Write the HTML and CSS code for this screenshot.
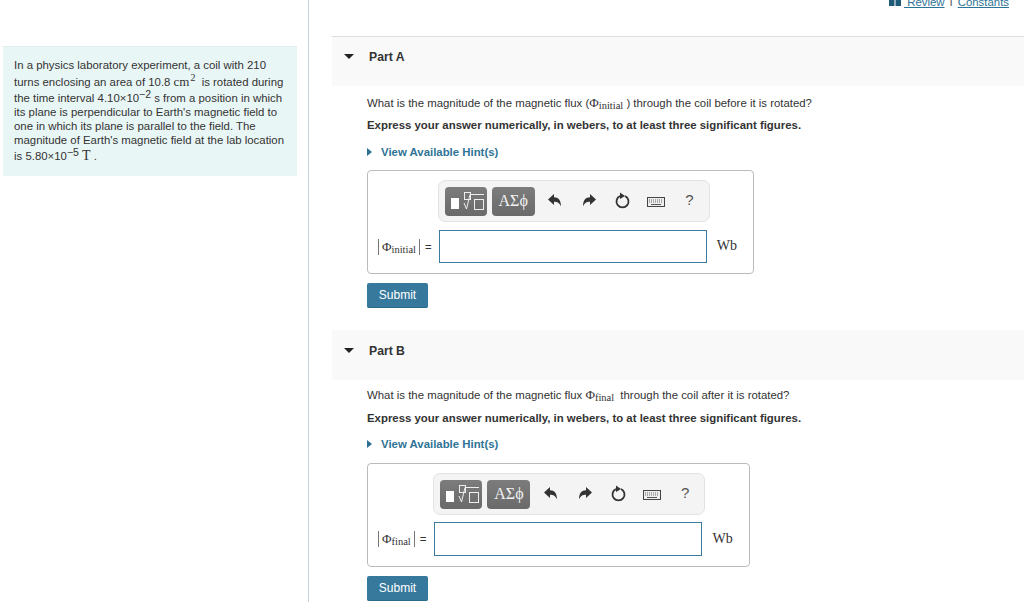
FILE: index.html
```html
<!DOCTYPE html>
<html lang="en">
<head>
    <meta charset="UTF-8">
    <title>Part A and Part B</title>
    <link rel="stylesheet" href="styles.css">
</head>
<body>
    <aside class="sidebar">
        <div class="problem">
            In a physics laboratory experiment, a coil with 210 turns enclosing an area of 10.8
            <span class="math cm">cm<sup>2</sup></span> is rotated during the time interval
            4.10×10<sup>−2</sup> s from a position in which its plane is perpendicular to Earth's
            magnetic field to one in which its plane is parallel to the field. The magnitude of
            Earth's magnetic field at the lab location is 5.80×10<sup>−5</sup> <span class="math big">T</span> .
        </div>
    </aside>

    <main class="main">
        <div class="toplinks">
            <svg class="book" width="12" height="6" viewBox="0 0 12 6"><rect width="5.500" height="6" fill="#1f5a78"/><rect x="6.500" width="5.500" height="6" fill="#1f5a78"/></svg>
            <a href="#">&nbsp;Review</a><span class="sep">I</span><a href="#">Constants</a>
        </div>

        <section class="part">
            <h2 class="part-head"><span class="caret-down"></span>Part A</h2>
            <div class="part-body part-body-a">
                <p class="question">What is the magnitude of the magnetic flux (<span class="math phi">Φ<sub>initial</sub></span> ) through the coil before it is rotated?</p>
                <p class="instruction">Express your answer numerically, in webers, to at least three significant figures.</p>
                <a class="hints" href="#"><span class="caret-right"></span>View Available Hint(s)</a>
                <div class="answer">
                    <div class="toolbar">
                        <span class="tool-btn"><svg width="42" height="29" viewBox="0 0 42 29"><rect x="6" y="11" width="8" height="11" fill="#fff"/><rect x="19.500" y="5.500" width="6" height="7" fill="none" stroke="#eee"/><path d="M19 16l2.500 6L25 7.500h14" fill="none" stroke="#eee"/><rect x="29.500" y="12.500" width="9" height="10" fill="none" stroke="#eee"/></svg></span>
                        <span class="tool-btn greek">ΑΣϕ</span>
                        <span class="tool-icons">
                            <svg width="14" height="13" viewBox="0 0 14 13"><path d="M0 5.500L6 0v3.200c4.500 0 7 3 7 9.300-1.500-3.500-3.500-4.700-7-4.700V11z" fill="#333"/></svg>
                            <svg width="14" height="13" viewBox="0 0 14 13"><path d="M14 5.500L8 0v3.200c-4.500 0-7 3-7 9.300 1.500-3.500 3.500-4.700 7-4.700V11z" fill="#333"/></svg>
                            <svg width="15" height="17" viewBox="0 0 15 17"><path d="M10 4a6 6 0 1 1-5 0" fill="none" stroke="#333" stroke-width="1.800"/><path d="M5 .5l5 3.500-5 3z" fill="#333"/></svg>
                            <svg class="keys" width="18" height="10" viewBox="0 0 18 10"><rect x=".5" y=".5" width="17" height="9" fill="#eee" stroke="#444"/><path d="M2 3h14M2 5h14" stroke="#666" stroke-dasharray="1 1"/><path d="M4 7.500h10" stroke="#555"/></svg>
                            <span class="help">?</span>
                        </span>
                    </div>
                    <label class="answer-label"><span class="abs"><span class="math phi">Φ<sub>initial</sub></span></span><span class="eq">=</span></label>
                    <input class="answer-input" type="text">
                    <span class="unit">Wb</span>
                </div>
                <button class="submit">Submit</button>
            </div>
        </section>

        <section class="part part-b">
            <h2 class="part-head"><span class="caret-down"></span>Part B</h2>
            <div class="part-body part-body-b">
                <p class="question">What is the magnitude of the magnetic flux <span class="math phi phi-final">Φ<sub>final</sub></span> through the coil after it is rotated?</p>
                <p class="instruction">Express your answer numerically, in webers, to at least three significant figures.</p>
                <a class="hints" href="#"><span class="caret-right"></span>View Available Hint(s)</a>
                <div class="answer">
                    <div class="toolbar">
                        <span class="tool-btn"><svg width="42" height="29" viewBox="0 0 42 29"><rect x="6" y="11" width="8" height="11" fill="#fff"/><rect x="19.500" y="5.500" width="6" height="7" fill="none" stroke="#eee"/><path d="M19 16l2.500 6L25 7.500h14" fill="none" stroke="#eee"/><rect x="29.500" y="12.500" width="9" height="10" fill="none" stroke="#eee"/></svg></span>
                        <span class="tool-btn greek">ΑΣϕ</span>
                        <span class="tool-icons">
                            <svg width="14" height="13" viewBox="0 0 14 13"><path d="M0 5.500L6 0v3.200c4.500 0 7 3 7 9.300-1.500-3.500-3.500-4.700-7-4.700V11z" fill="#333"/></svg>
                            <svg width="14" height="13" viewBox="0 0 14 13"><path d="M14 5.500L8 0v3.200c-4.500 0-7 3-7 9.300 1.500-3.500 3.500-4.700 7-4.700V11z" fill="#333"/></svg>
                            <svg width="15" height="17" viewBox="0 0 15 17"><path d="M10 4a6 6 0 1 1-5 0" fill="none" stroke="#333" stroke-width="1.800"/><path d="M5 .5l5 3.500-5 3z" fill="#333"/></svg>
                            <svg class="keys" width="18" height="10" viewBox="0 0 18 10"><rect x=".5" y=".5" width="17" height="9" fill="#eee" stroke="#444"/><path d="M2 3h14M2 5h14" stroke="#666" stroke-dasharray="1 1"/><path d="M4 7.500h10" stroke="#555"/></svg>
                            <span class="help">?</span>
                        </span>
                    </div>
                    <label class="answer-label"><span class="abs"><span class="math phi">Φ<sub>final</sub></span></span><span class="eq">=</span></label>
                    <input class="answer-input" type="text">
                    <span class="unit">Wb</span>
                </div>
                <button class="submit">Submit</button>
            </div>
        </section>
    </main>
</body>
</html>
```

FILE: styles.css
```css
html, body {
    margin: 0;
    height: 602px;
    overflow: hidden;
}

body {
    display: flex;
    background: #fff;
    font-family: "Liberation Sans", Arial, sans-serif;
    font-size: 11.4px;
    color: #333;
}

.sidebar {
    box-sizing: border-box;
    flex: 0 0 309px;
    height: 602px;
    padding: 46px 11px 0 3px;
    border-right: 1px solid #c4d2e4;
}

.problem {
    padding: 11px 10px 12px 11px;
    background: #e9f6f6;
    border-top: 1px solid #e2eeee;
    line-height: 14px;
}

.problem sup {
    font-size: 10.500px;
    line-height: 10px;
    vertical-align: 4px;
}

.math {
    font-family: "Liberation Serif", "DejaVu Serif", serif;
}

.cm {
    margin-right: 3px;
    font-size: 13px;
}

.problem .cm sup {
    margin-left: 1px;
    font-size: 10px;
    line-height: 12px;
    vertical-align: 5px;
}

.big {
    font-size: 14px;
    line-height: 16px;
}

.phi {
    font-size: 13px;
}

.phi sub {
    font-size: 10.500px;
    line-height: 0;
    vertical-align: -2px;
}

.phi-final {
    margin-right: 3px;
}

.main {
    flex: 1;
    min-width: 0;
    padding-left: 23px;
}

.toplinks {
    display: flex;
    justify-content: flex-end;
    align-items: flex-start;
    height: 41px;
    margin-top: -5px;
    padding-right: 15px;
    line-height: 14px;
    color: #555;
}

.toplinks a {
    color: #2f7396;
}

.book {
    margin: 5px 3px 0 0;
}

.sep {
    margin: 0 5px;
}

.part-head {
    display: flex;
    align-items: center;
    box-sizing: border-box;
    height: 50px;
    margin: 0;
    padding-bottom: 10px;
    background: #f9f9f9;
    border-top: 1px solid #ddd;
    font-size: 12.200px;
    font-weight: bold;
}

.part-b .part-head {
    padding-bottom: 9px;
    border-top: 0;
}

.caret-down {
    width: 0;
    height: 0;
    margin: 0 15px 0 12px;
    border-top: 5px solid #222;
    border-left: 5px solid transparent;
    border-right: 5px solid transparent;
}

.caret-right {
    display: inline-block;
    width: 0;
    height: 0;
    margin-right: 9px;
    border-left: 5px solid #2f6f92;
    border-top: 4.500px solid transparent;
    border-bottom: 4.500px solid transparent;
}

.part-body {
    padding-left: 35px;
}

.part-body-a {
    padding-top: 9px;
    height: 235px;
}

.part-body-b {
    padding-top: 7px;
}

.question {
    margin: 0;
    line-height: 16px;
}

.instruction {
    margin: 7px 0 0;
    font-weight: bold;
    line-height: 15px;
}

.part-body-b .instruction {
    margin-top: 8px;
}

.hints {
    display: block;
    margin-top: 11px;
    font-weight: bold;
    line-height: 15px;
    color: #2f7396;
    text-decoration: none;
}

.part-body-a .hints {
    margin-top: 12px;
}

.answer {
    display: inline-grid;
    grid-template-columns: auto 268px auto;
    align-items: center;
    row-gap: 8px;
    box-sizing: border-box;
    height: 104px;
    margin-top: 10px;
    padding: 9px 16px 10px 10px;
    border: 1px solid #bbb;
    border-radius: 4px;
    vertical-align: top;
}

.part-body-b .answer {
    margin-top: 11px;
    row-gap: 7px;
}

.part-body-b .answer-input {
    height: 34px;
}

.toolbar {
    grid-column: 2 / 4;
    justify-self: start;
    display: flex;
    align-items: center;
    box-sizing: border-box;
    width: 272px;
    height: 42px;
    margin-left: -1px;
    padding-left: 6px;
    background: #f4f4f4;
    border: 1px solid #e2e2e2;
    border-radius: 7px;
}

.tool-btn {
    display: flex;
    align-items: center;
    justify-content: center;
    width: 42px;
    height: 29px;
    background: linear-gradient(#7c7c7c, #6a6a6a);
    border-radius: 4px;
}

.greek {
    width: 43px;
    margin-left: 5px;
    padding-bottom: 1px;
    box-sizing: border-box;
    font-family: "Liberation Serif", serif;
    font-size: 16px;
    color: #f2f2f2;
}

.tool-icons {
    display: grid;
    grid-template-columns: repeat(5, 33.500px);
    justify-items: center;
    align-items: center;
    margin-left: 4px;
    padding-bottom: 2px;
}

.keys {
    margin-top: 3px;
}

.help {
    font-size: 15px;
    line-height: 16px;
    color: #555;
}

.answer-label {
    display: flex;
    align-items: center;
    padding-right: 7px;
    white-space: nowrap;
}

.part-body-b .answer-label {
    padding-right: 8px;
}

.abs {
    padding: 0 3px;
    border-left: 1px solid #777;
    border-right: 1px solid #777;
    line-height: 15px;
}

.eq {
    margin-left: 5px;
}

.answer-input {
    box-sizing: border-box;
    width: 268px;
    height: 33px;
    margin: 0;
    padding: 0;
    background: #fff;
    border: 1px solid #3a7a9c;
    outline: 0;
}

.unit {
    padding: 0 0 2px 10px;
    font-family: "Liberation Serif", serif;
    font-size: 14px;
}

.part-body-b .unit {
    padding-bottom: 0;
}

.submit {
    display: block;
    width: 61px;
    height: 25px;
    margin-top: 9px;
    padding: 0;
    background: #37799c;
    border: 0;
    border-bottom: 1px solid #2d6a8a;
    border-radius: 2px;
    font-family: inherit;
    font-size: 12px;
    color: #fff;
}
```
